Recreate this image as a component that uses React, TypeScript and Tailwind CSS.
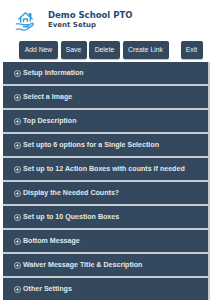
import React from 'react';

const sections = [
  'Setup Information',
  'Select a Image',
  'Top Description',
  'Set upto 6 options for a Single Selection',
  'Set up to 12 Action Boxes with counts if needed',
  'Display the Needed Counts?',
  'Set up to 10 Question Boxes',
  'Bottom Message',
  'Waiver Message Title & Description',
  'Other Settings',
];

const buttons = [
  { label: 'Add New', w: 'w-[39px]' },
  { label: 'Save', w: 'w-[26px]' },
  { label: 'Delete', w: 'w-[31px]' },
  { label: 'Create Link', w: 'w-[46px]' },
];

const HouseHandIcon = ({ className }: { className?: string }) => (
  <svg viewBox="0 0 24 24" className={className} fill="none" stroke="currentColor" strokeWidth={1.5} strokeLinecap="round" strokeLinejoin="round">
    <path d="M5 10.5 L12 4 L19 10.5" />
    <path d="M16 7.5 V5 h1.5 v3.8" />
    <path d="M7 9 V13.5 M17 9 V12.5" />
    <path d="M10 13 v-2.5 h4 v2.5" />
    <path d="M2.5 15.5 h3 c2 0 3.5 1 5.5 1 h3 c1.3 0 1.3 2 0 2 h-4" />
    <path d="M2.5 21 h3.5 l4 1 c1 0.2 2 0 3-0.6 l6.5-4.4 c1.2-0.9 0.2-2.5-1-1.9 l-4.5 2.4" />
  </svg>
);

const CirclePlus = () => (
  <svg viewBox="0 0 12 12" className="w-[7px] h-[7px] shrink-0" fill="none" stroke="currentColor" strokeWidth={1.2}>
    <circle cx="6" cy="6" r="5.2" />
    <path d="M6 3 V9 M3 6 H9" />
  </svg>
);

const btnClass =
  'h-[18px] flex items-center justify-center rounded-[2px] bg-[#34495e] text-[#eef1f4] text-[6.8px] shadow-[0_1px_1px_rgba(0,0,0,0.25)]';

const App: React.FC = () => {
  return (
    <div className="w-[210px] h-[300px] overflow-hidden bg-white font-['Liberation_Sans',Arial,sans-serif]">
      <div className="flex items-center h-[38px] pl-[14px] pt-[2px]">
        <HouseHandIcon className="w-[23px] h-[23px] text-[#3b9bdc]" />
        <div className="ml-[11px] flex flex-col leading-none">
          <span className="text-[8.5px] font-bold text-[#1d4a78] font-['DejaVu_Sans',Verdana,sans-serif]">Demo School PTO</span>
          <span className="mt-[3px] text-[7px] font-bold text-[#3a4a5a] font-['DejaVu_Sans',Verdana,sans-serif]">Event Setup</span>
        </div>
      </div>

      <div className="flex items-center h-[18px] mt-[3px] pl-[19px]">
        <div className="flex gap-[2.5px]">
          {buttons.map((b) => (
            <button key={b.label} className={`${b.w} ${btnClass}`}>
              {b.label}
            </button>
          ))}
        </div>
        <button className={`ml-[12px] w-[22px] ${btnClass}`}>Exit</button>
      </div>

      <div className="mt-[3px] ml-[3px] pr-[2px] bg-[#c6ccd2] flex flex-col gap-[2px]">
        {sections.map((s) => (
          <div key={s} className="h-[22px] shrink-0 flex items-center gap-[2px] pl-[11px] bg-[#34495e] text-[#e3e7eb]">
            <CirclePlus />
            <span className="text-[7.1px] font-bold whitespace-nowrap">{s}</span>
          </div>
        ))}
      </div>
    </div>
  );
};

export default App;
